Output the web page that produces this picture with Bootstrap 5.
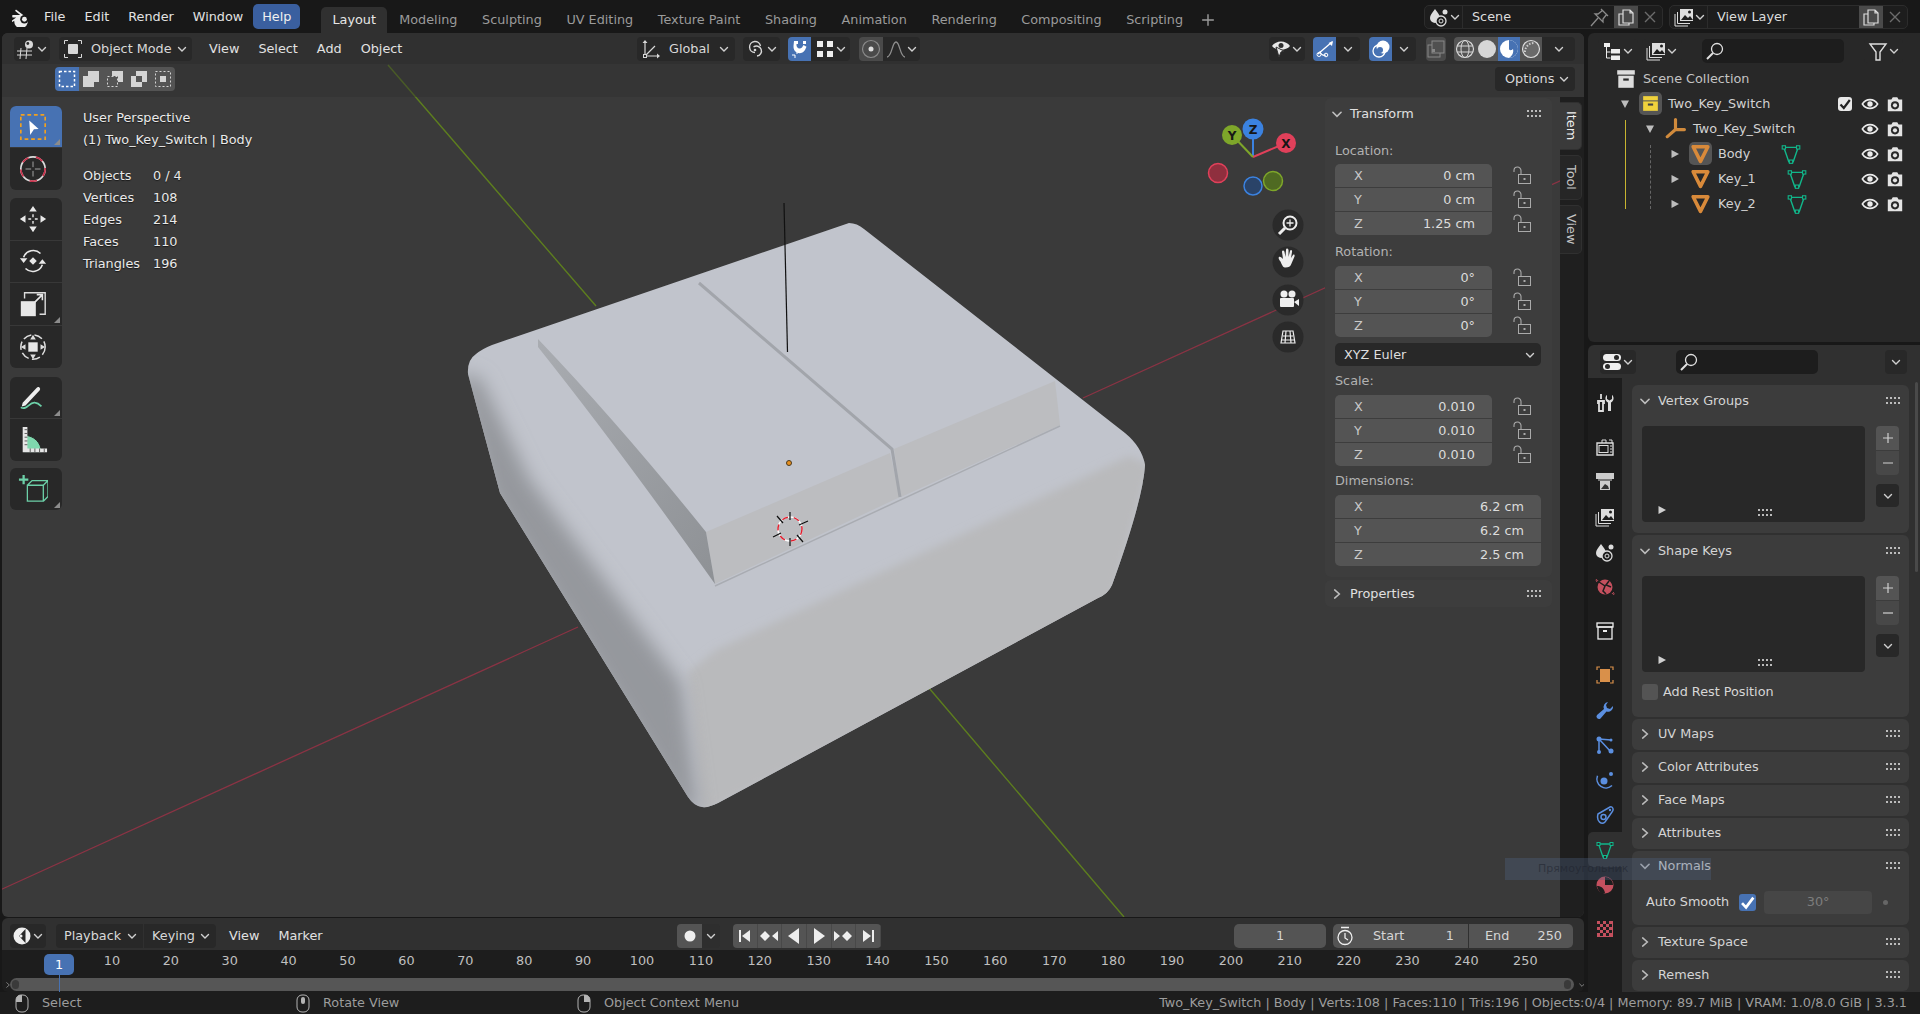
<!DOCTYPE html>
<html lang="en">
<head>
<meta charset="UTF-8">
<title>Blender 3.3</title>
<link href="https://cdn.jsdelivr.net/npm/bootstrap@5.3.3/dist/css/bootstrap.min.css" rel="stylesheet">
<script src="https://cdn.jsdelivr.net/npm/bootstrap@5.3.3/dist/js/bootstrap.bundle.min.js"></script>
<style>
html, body { width: 1920px; height: 1014px; overflow: hidden; }
body { background: #181818; color: #d6d6d6; font: 12.8px/1.2 "DejaVu Sans", sans-serif; white-space: nowrap; }
.ico { width: 20px; height: 20px; flex-shrink: 0; fill: currentColor; }
.ico-s { width: 12px; height: 12px; flex-shrink: 0; color: #d0d0d0; }
.app-shell { display: grid; grid-template-rows: 33px 959px 22px; height: 1014px; position: relative; }
.main-split { display: grid; grid-template-columns: 1588px 332px; }

/* top bar */
.top-bar { background: #181818; padding-left: 12px; }
.logo-ico { width: 21px; height: 21px; margin-right: 1.5px; color: #eee; }
.menu-item { padding: 0 9.5px; color: #e2e2e2; white-space: nowrap; }
.menu-help { background: #3a5f9f; border-radius: 5px; height: 25px; padding: 0 9px; margin-left: .5px; display: flex; align-items: center; color: #f0f0f0; }
.ws-tabs { margin-left: 21px; align-self: flex-end; height: 26px; }
.ws-tab { padding: 0 12.3px; color: #9b9b9b; white-space: nowrap; border-radius: 5px 5px 0 0; }
.ws-tab-on { background: #303030; color: #e6e6e6; padding: 0 11px; }
.ws-add { width: 14px; height: 14px; margin-left: 6px; color: #9b9b9b; }
.scene-box { height: 24px; background: #1d1d1d; border: 1px solid #2c2c2c; border-radius: 5px; margin-right: 6px; }
.scene-w { width: 239px; }
.layer-w { width: 239px; margin-right: 12px; }
.scene-pick { width: 38px; padding-left: 4px; border-right: 1px solid #2c2c2c; height: 100%; gap: 0; }
.scene-name { padding-left: 9px; color: #dcdcdc; }
.copy-btn { width: 24px; height: 22px; background: #4a4a4a; color: #ddd; }
.x-btn { width: 24px; height: 22px; color: #6c6c6c; font-size: 15px; }
.ico-c { width: 20px; height: 20px; }

/* viewport */
.left-col { display: flex; flex-direction: column; padding: 0 4px 0 2px; gap: 1px; }
.view-area { height: 884px; position: relative; border-radius: 6px; overflow: hidden; background: #3a3a3a; display: flex; flex-direction: column; }
.scene-svg { position: absolute; left: 0; top: 0; width: 1582px; height: 884px; }
.hdr-row { height: 31px; background: #303030; position: relative; flex-shrink: 0; padding-right: 9px; }
.tool-row { height: 33px; background: rgba(48,48,48,.45); position: relative; flex-shrink: 0; padding: 0 9px 3px 53px; }
.view-left { width: 635px; flex-shrink: 0; padding-left: 12px; }
.bl-btn { height: 24px; background: #282828; border-radius: 4px; color: #d8d8d8; flex-shrink: 0; }
.bl-on { background: #4772b3 !important; color: #fff; }
.bl-gray { background: #545454 !important; color: #e8e8e8; }
.bl-dim { background: #4a4a4a !important; color: #bbb; }
.join-l { border-radius: 4px 0 0 4px; }
.join-r { border-radius: 0 4px 4px 0; }
.w-edit { width: 36px; }
.w-mode { width: 133px; margin-left: 9px; margin-right: 7.5px; padding: 0 6px 0 4px; }
.w-global { width: 98px; padding: 0 5px 0 4px; }
.w-pivot { width: 37px; margin-left: 8px; }
.w-23 { width: 23px; }
.w-24 { width: 24px; }
.w-39 { width: 39px; }
.w-37 { width: 37px; }
.ms-8 { margin-left: 8px; }
.ms-9 { margin-left: 9px; }
.ms-10 { margin-left: 10px; }
.view-right { margin-left: auto; }
.w-36 { width: 36px; }
.w-22 { width: 22px; }
.w-33 { width: 33px; }
.w-20 { width: 20px; }
.sel-modes { height: 24px; border-radius: 4px; overflow: hidden; }
.sel-mode { width: 24px; height: 24px; background: #545454; color: #d4d4d4; }
.opt-btn { width: 80px; padding: 0 5px 0 10px; }
.view-body { flex-grow: 1; position: relative; min-height: 0; }
.tool-col { width: 52px; margin: 9px 0 0 8px; flex-shrink: 0; }
.tool-group { background: #282828; border-radius: 6px; margin-bottom: 8px; overflow: hidden; }
.tool-group-b { margin-bottom: 9px; }
.tool-group-b .tool-item { height: 42.5px; }
.tool-group-c { margin-bottom: 7px; }
.tool-item { height: 42px; display: flex; align-items: center; justify-content: center; border-bottom: 1px solid #383838; position: relative; padding-right: 6px; }
.tool-item:last-child { border-bottom: 0; }
.tool-item .ico { width: 30px; height: 30px; }
.tool-on { background: #4772b3; }
.corner-mark { position: absolute; right: 2px; bottom: 2px; width: 0; height: 0; border-left: 6px solid transparent; border-bottom: 6px solid #8c8c8c; }
.stats-col { margin: 10px 0 0 21px; line-height: 22px; color: #eaeaea; text-shadow: 0 1px 1px #1a1a1a; white-space: nowrap; }
.stats-gap { height: 14px; }
.stats-key { display: inline-block; width: 70px; }
.gizmo-svg { width: 110px; height: 270px; margin-left: auto; flex-shrink: 0; }
.n-panels { width: 227px; margin: 1px 8px 0 10px; flex-shrink: 0; }
.n-panel { background: #3d3d3d; border-radius: 6px; }
.n-head { height: 32px; padding: 0 10px 0 5px; color: #e0e0e0; }
.n-body { padding: 0 11px 11px 10px; }
.n-label { height: 24px; color: #b2b2b2; margin-top: 7px; padding-bottom: 4px; display: flex; align-items: center; }
.n-label-first { margin-top: 11px; padding-bottom: 4px; height: 23px; }
.n-label-mid { margin-top: 5px; }
.n-label-dim { margin-top: 5px; }
.vec-fields { width: 157px; border-radius: 5px; overflow: hidden; display: flex; flex-direction: column; gap: 1px; }
.vec-wide { width: 206px; }
.num-field { height: 23px; background: #545454; padding: 0 17px 0 19px; color: #dcdcdc; }
.num-field span:first-child { color: #c8c8c8; }
.vec-locks { width: 49px; display: flex; flex-direction: column; gap: 1px; }
.lock-cell { height: 23px; padding-left: 20px; display: flex; align-items: center; color: #aaa; }
.euler-pick { height: 23px; background: #282828; border-radius: 5px; margin-top: 6px; padding: 0 5px 0 9px; color: #dedede; }
.n-props { margin-top: 3px; height: 27px; }
.side-tabs { width: 24px; background: #1f1f1f; flex-shrink: 0; }
.side-tab { width: 22px; background: #262626; border-radius: 0 5px 5px 0; margin-bottom: 5px; color: #c4c4c4; writing-mode: vertical-rl; text-align: center; border: 1px solid #303030; border-left: 0; }
.side-tab-on { background: #3a3a3a; color: #f0f0f0; height: 48px; line-height: 20px; margin-top: 5px; }
.side-tab-a { height: 45px; line-height: 20px; }
.side-tab-b { height: 49px; line-height: 20px; }
.chev-head { width: 14px; height: 14px; margin-right: 6px; color: #bdbdbd; }

/* timeline */
.time-area { height: 74px; background: #1d1d1d; border-radius: 6px; overflow: hidden; position: relative; }
.time-head { height: 32px; background: #303030; padding: 3px 11px 0 8px; }
.time-left { width: 667px; flex-shrink: 0; }
.w-playback { width: 87px; margin-left: 10px; padding: 0 5px 0 8px; }
.w-keying { width: 73px; padding: 0 5px 0 8px; border-left: 1px solid #303030; margin-right: 3.5px; }
.w-record { width: 25px; }
.w-recarrow { width: 18px; background: #2e2e2e; color: #555; }
.transport { margin-left: 13px; border-radius: 4px; overflow: hidden; }
.trans-btn { width: 24.66px; height: 24px; background: #545454; color: #e8e8e8; border-right: 1px solid #484848; }
.frame-now { width: 92px; height: 24px; background: #545454; border-radius: 5px; margin-right: 7px; }
.timer-btn { width: 24px; height: 24px; background: #545454; border-radius: 5px 0 0 5px; color: #e4e4e4; }
.range-field { height: 24px; background: #545454; padding: 0 14px 0 16px; }
.w-start { width: 111px; margin-right: 1px; }
.w-end { width: 104px; border-radius: 0 5px 5px 0; padding-right: 11px; }
.ruler-row { height: 27px; color: #c0c0c0; }
.frame-box { width: 30px; height: 21px; margin: 4px 8.5px 0 42px; background: #4772b3; border-radius: 5px; color: #fff; }
.frame-cell { width: 58.9px; flex-shrink: 0; text-align: center; padding-top: 3px; }
.scroll-row { height: 15px; padding-left: 2px; color: #8a8a8a; }
.scroll-bar { width: 1564px; height: 13px; margin-left: -2px; margin-right: 4px; background: #565656; border-radius: 7px; position: relative; flex-shrink: 0; }
.scroll-knob { position: absolute; width: 7px; height: 9px; top: 2px; left: 2px; border-radius: 4px; background: #3a3a3a; }
.scroll-knob-r { left: auto; right: 3px; }
.play-line { position: absolute; left: 57px; top: 56px; width: 1px; height: 18px; background: #4772b3; }
.chev-tiny { width: 8px; height: 12px; flex-shrink: 0; }

/* right column */
.right-col { display: flex; flex-direction: column; gap: 3px; padding-right: 0; }
.outliner { height: 309px; background: #282828; border-radius: 6px 0 0 6px; overflow: hidden; }
.out-head { height: 33px; padding: 3px 0 0 10px; }
.w-40 { width: 40px; }
.out-search { width: 142px; height: 24px; background: #1d1d1d; border-radius: 5px; margin-left: 20px; padding-left: 3px; }
.w-filter { width: 39px; margin-left: 20px; }
.tree-row { height: 25px; color: #d2d2d2; white-space: nowrap; padding-right: 16px; }
.tree-root { padding-left: 27px; color: #c4c4c4; }
.tree-l1 { padding-left: 31px; }
.tree-l2 { padding-left: 56px; }
.tree-l3 { padding-left: 81px; }
.tree-arrow { width: 12px; height: 12px; color: #bdbdbd; flex-shrink: 0; }
.tree-ico { width: 23px; height: 23px; margin-left: 8px; margin-right: 6px; flex-shrink: 0; border-radius: 5px; padding: 1px; }
.tree-ico-on { background: #555; }
.root-ico { width: 22px; height: 22px; margin-right: 6px; }
.tree-data { width: 22px; height: 22px; margin-left: 30px; }
.tree-tools { margin-left: auto; gap: 7px; }
.tree-tools .ico { width: 18px; height: 18px; }
.tree-check { width: 14px; height: 14px; margin-right: 2px; background: #e8e8e8; border-radius: 3px; color: #222; }
.guide-l1 { position: absolute; left: 37px; top: 87px; width: 1px; height: 89px; background: #c8b430; }
.guide-l2 { position: absolute; left: 62px; top: 112px; height: 64px; border-left: 1px dashed #666; }
.outliner-wrap { position: relative; }
.props-area { height: 647px; background: #303030; border-radius: 6px 0 0 0; overflow: hidden; position: relative; }
.props-head { height: 33px; padding: 0 13px 0 12px; }
.props-search { width: 142px; height: 24px; background: #1d1d1d; border-radius: 5px; margin-left: 40px; padding-left: 3px; }
.props-body { height: 614px; }
.tab-col { width: 34px; background: #1d1d1d; padding-top: 7px; flex-shrink: 0; }
.tab-cell { height: 35px; display: flex; align-items: center; justify-content: center; }
.tab-cell .ico { width: 20px; height: 20px; }
.tab-gap { margin-top: 9px; }
.tab-on { background: #303030; border-radius: 5px 0 0 5px; }
.panel-col { flex-grow: 1; padding: 7px 11px 0 10px; overflow: hidden; }
.pr-panel { background: #3c3c3c; border-radius: 6px; margin-bottom: 2px; }
.pr-head { height: 31px; padding: 0 8px 0 6px; color: #d4d4d4; }
.grip-ico { width: 16px; height: 10px; margin-left: auto; color: #bcbcbc; }
.list-wrap { padding: 10px 10px 11px 10px; }
.list-box { width: 223px; height: 96px; background: #282828; border-radius: 4px; padding: 0 0 6px 14px; position: relative; }
.list-grip { position: absolute; left: 115px; bottom: 4px; width: 16px; height: 10px; color: #bbb; }
.list-btns { width: 23px; margin-left: 11px; }
.sq-plus { height: 24px; background: #545454; border-radius: 4px 4px 0 0; color: #eee; }
.sq-minus { height: 24px; background: #484848; border-radius: 0 0 4px 4px; color: #7e7e7e; margin-top: 1px; }
.sq-more { height: 23px; background: #282828; border-radius: 4px; margin-top: 9px; color: #ddd; }
.rest-row { height: 32px; padding: 0 10px 0 10px; margin: -7px 0 0; }
.rest-wrap { padding-bottom: 8.5px; }
.fake-check { width: 16px; height: 16px; background: #545454; border-radius: 3px; margin-right: 5px; }
.smooth-row { height: 43px; padding: 5px 10px 7px 14px; }
.on-check { width: 17px; height: 17px; background: #4772b3; border-radius: 3px; color: #fff; margin-left: 10px; }
.angle-field { width: 108px; height: 23px; background: #464646; border-radius: 4px; margin-left: 8px; color: #7d7d7d; }
.anim-dot { width: 5px; height: 5px; border-radius: 50%; background: #666; margin-left: 11px; }
.prop-scroll { position: absolute; right: 2px; top: 37px; width: 3px; height: 190px; background: #4a4a4a; border-radius: 2px; }

/* status */
.status-bar { background: #1d1d1d; color: #9c9c9c; white-space: nowrap; padding-left: 15px; }
.hint-item { width: 281px; flex-shrink: 0; gap: 13px; }
.status-info { margin-left: auto; padding-right: 13px; }
.mouse-ico { width: 14px; height: 19px; flex-shrink: 0; color: #b4b4b4; }
.ghost-tip { position: absolute; left: 1505px; top: 858px; width: 206px; height: 22px; background: rgba(80,104,138,.32); font-size: 11px; color: rgba(30,34,44,.55); padding-left: 33px; line-height: 22px; }
</style>
</head>
<body>
<svg class="d-none" xmlns="http://www.w3.org/2000/svg">
  <symbol id="i-logo" viewBox="0 0 20 20"><path d="M.8 8.6h7L3.4 5.1c-.8-.7.2-1.9 1-1.3l6.6 5A6.4 6.4 0 1 1 2.2 14L.6 15.1c-.9.4-1.4-.6-.7-1.2L4 11H1c-1 0-1-2.4-.2-2.4z" fill="#eee"/><circle cx="11.8" cy="12.6" r="4" fill="#181818"/><circle cx="11.8" cy="12.6" r="2.3" fill="#eee"/></symbol>
  <symbol id="i-chev" viewBox="0 0 12 12"><path d="M2.5 4.5 6 8l3.5-3.5" fill="none" stroke="currentColor" stroke-width="1.4" stroke-linecap="round"/></symbol>
  <symbol id="i-chevr" viewBox="0 0 12 12"><path d="M4 2.5 8 6l-4 3.5" fill="none" stroke="currentColor" stroke-width="1.3" stroke-linecap="round"/></symbol>
  <symbol id="i-view3d" viewBox="0 0 20 20"><path d="M1 12h15M1 16h15M5 9l-1 11M11 9l-1 11" stroke="currentColor" fill="none"/><circle cx="13" cy="5.5" r="4" fill="currentColor"/><circle cx="11.8" cy="4.5" r="1.4" fill="#282828"/></symbol>
  <symbol id="i-objmode" viewBox="0 0 20 20"><rect x="5" y="5" width="10" height="10" rx="1" fill="currentColor"/><path d="M1.5 5V1.5H5M15 1.5h3.5V5M18.500 15v3.500H15M5 18.500H1.500V15" fill="none" stroke="currentColor"/></symbol>
  <symbol id="i-global" viewBox="0 0 20 20"><path d="M4 2v15h14M4 17 14 7" fill="none" stroke="currentColor" stroke-width="1.2"/><path d="M4 1l2.500 3h-5zM19 17l-3 2.500v-5z" fill="currentColor"/><rect x="2.500" y="15.500" width="3" height="3" fill="#282828" stroke="currentColor"/></symbol>
  <symbol id="i-pivot" viewBox="0 0 20 20"><path d="M9 13.500A5.500 5.500 0 1 1 14.500 7" fill="none" stroke="currentColor" stroke-width="1.4"/><path d="M7.500 8a5 5 0 1 1 3.500 9" fill="none" stroke="currentColor" stroke-width="1.4" transform="rotate(0)"/><circle cx="9" cy="11" r="1.300"/></symbol>
  <symbol id="i-snap" viewBox="0 0 20 20"><path d="M4 2h4v3H6.500c-.5 4 3 6 5.500 3.500l1.500-2.500 3 1.800L15 11c-4 6-12 3-11.500-4z" fill="#fff"/><rect x="13" y="2" width="3" height="3" fill="#fff"/><path d="M2 16h3v3M7 13v2" stroke="#fff" fill="none"/></symbol>
  <symbol id="i-grid4" viewBox="0 0 20 20"><rect x="2" y="2" width="6" height="6" fill="#eee"/><rect x="12" y="2" width="6" height="6" fill="#eee"/><rect x="2" y="12" width="6" height="6" fill="#eee"/><rect x="12" y="12" width="6" height="6" fill="#eee"/></symbol>
  <symbol id="i-prop" viewBox="0 0 20 20"><circle cx="10" cy="10" r="8.500" fill="none" stroke="#8a8a8a" stroke-width="1.200"/><circle cx="10" cy="10" r="2.500" fill="#ddd"/></symbol>
  <symbol id="i-fall" viewBox="0 0 20 20"><path d="M1 18c5 0 5-15 9-15s4 15 9 15" fill="none" stroke="#8f8f8f" stroke-width="1.300"/></symbol>
  <symbol id="i-visible" viewBox="0 0 20 20"><path d="M1 7c4-6 14-6 18 0-4 5-14 5-18 0z" fill="#e8e8e8"/><circle cx="10" cy="6.500" r="2.500" fill="#303030"/><path d="M5 8l8 4-3 1-2 5z" fill="#e8e8e8" stroke="#303030"/></symbol>
  <symbol id="i-gizmo" viewBox="0 0 20 20"><path d="M3 15 17 3M5 12c0 3 3 5 6 4" fill="none" stroke="#fff" stroke-width="1.300"/><path d="M18 2l-1 5-3.500-3z" fill="#fff"/><circle cx="4" cy="15.500" r="2" fill="none" stroke="#fff"/><circle cx="11" cy="16" r="1.800" fill="none" stroke="#fff"/></symbol>
  <symbol id="i-overlay" viewBox="0 0 20 20"><circle cx="8" cy="12" r="6" fill="none" stroke="#fff" stroke-width="1.300"/><circle cx="12" cy="8" r="6.500" fill="#fff"/><circle cx="9" cy="11" r="3" fill="#4772b3"/></symbol>
  <symbol id="i-xray" viewBox="0 0 20 20"><rect x="2" y="6" width="12" height="12" fill="none" stroke="#888"/><rect x="6" y="2" width="12" height="12" fill="#505050" stroke="#888"/><rect x="6" y="10" width="3" height="3" fill="#888"/></symbol>
  <symbol id="i-wire" viewBox="0 0 20 20"><circle cx="10" cy="10" r="8.500" fill="none" stroke="#d8d8d8" stroke-width="1.200"/><ellipse cx="10" cy="10" rx="4" ry="8.500" fill="none" stroke="#d8d8d8"/><path d="M2 7h16M2 13h16" stroke="#d8d8d8"/></symbol>
  <symbol id="i-solid" viewBox="0 0 20 20"><circle cx="10" cy="10" r="9" fill="#d6d6d6"/></symbol>
  <symbol id="i-mat" viewBox="0 0 20 20"><circle cx="10" cy="10" r="9" fill="#fff"/><path d="M10 1a9 9 0 0 1 0 18c3-2 5-5 4-9-2 2-4 1-4 0z" fill="#4772b3"/></symbol>
  <symbol id="i-rend" viewBox="0 0 20 20"><circle cx="10" cy="10" r="8.500" fill="#6a6a6a" stroke="#ddd" stroke-width="1.200"/><path d="M4 13c0-5 4-9 9-9" fill="none" stroke="#ccc" stroke-dasharray="1.500 1.500" stroke-width="2"/></symbol>
  <symbol id="s-1" viewBox="0 0 20 20"><rect x="2.500" y="2.500" width="15" height="15" fill="none" stroke="#fff" stroke-width="1.500" stroke-dasharray="2.500 2"/></symbol>
  <symbol id="s-2" viewBox="0 0 20 20"><path d="M7 2h11v11h-5v5H2V7h5z" fill="currentColor"/></symbol>
  <symbol id="s-3" viewBox="0 0 20 20"><rect x="2.500" y="7.500" width="10" height="10" fill="none" stroke="currentColor" stroke-dasharray="2 2"/><path d="M7 2h11v11h-5V7H7z" fill="currentColor"/></symbol>
  <symbol id="s-4" viewBox="0 0 20 20"><path d="M7 2h11v11h-5V7H7zM2 7h5v6h6v5H2z" fill="currentColor"/></symbol>
  <symbol id="s-5" viewBox="0 0 20 20"><rect x="2.500" y="2.500" width="15" height="15" fill="none" stroke="currentColor" stroke-dasharray="2 2"/><rect x="7" y="7" width="6" height="6" fill="currentColor"/></symbol>
  <symbol id="t-select" viewBox="0 0 32 32"><rect x="3" y="3" width="26" height="26" fill="none" stroke="#f0a020" stroke-width="1.800" stroke-dasharray="4 3"/><path d="M12 9l10 9-5 .5-4 6z" fill="#fff"/></symbol>
  <symbol id="t-cursor" viewBox="0 0 32 32"><circle cx="16" cy="16" r="13" fill="none" stroke="#ddd" stroke-width="1.800"/><circle cx="16" cy="16" r="13" fill="none" stroke="#c8304a" stroke-width="1.800" stroke-dasharray="8 8"/><path d="M16 8v6M16 18v6M8 16h6M18 16h6" stroke="#aaa"/></symbol>
  <symbol id="t-move" viewBox="0 0 32 32"><path d="M16 2l4 6h-8zM16 30l-4-6h8zM2 16l6-4v8zM30 16l-6 4v-8z" fill="#e8e8e8"/><path d="M16 11v3M16 18v3M11 16h3M18 16h3" stroke="#e8e8e8" stroke-width="1.500"/></symbol>
  <symbol id="t-rotate" viewBox="0 0 32 32"><path d="M6 12a11 11 0 0 1 18-4M26 20A11 11 0 0 1 8 24" fill="none" stroke="#e8e8e8" stroke-width="1.700"/><path d="M16 12l4 4-4 4-4-4z" fill="#e8e8e8"/><path d="M2 13l4 5 4-5zM30 19l-4-5-4 5z" fill="#e8e8e8"/></symbol>
  <symbol id="t-scale" viewBox="0 0 32 32"><path d="M7 10V4h22v23h-6" fill="none" stroke="#ddd" stroke-width="1.500"/><rect x="3" y="13" width="16" height="16" fill="#e8e8e8"/><path d="M18 14l7-7M20 6h6v6" fill="none" stroke="#e8e8e8" stroke-width="1.700"/></symbol>
  <symbol id="t-trans" viewBox="0 0 32 32"><circle cx="16" cy="16" r="13" fill="none" stroke="#ddd" stroke-width="1.600" stroke-dasharray="9 3.500"/><rect x="11" y="11" width="10" height="10" fill="#e8e8e8"/><path d="M16 3l3 5h-6zM16 29l-3-5h6zM3 16l5-3v6zM29 16l-5 3v-6z" fill="#ddd"/></symbol>
  <symbol id="t-note" viewBox="0 0 32 32"><path d="M5 21 20 5c2-2 5 1 3 3L8 24l-4 1z" fill="#eee"/><path d="M3 26c6 4 9-6 15-5 4 .5 5 2 7 4" fill="none" stroke="#6cd0a8" stroke-width="1.800"/></symbol>
  <symbol id="t-meas" viewBox="0 0 32 32"><path d="M7 11a18 18 0 0 1 18 18H7z" fill="#7fd8ae" stroke="#222"/><path d="M5 2h5v23h21v4H5z" fill="#e6e6e6"/><path d="M7 5h3M7 9h3M7 13h3M7 17h3M7 21h3M13 25v4M18 25v4M23 25v4M28 25v4" stroke="#555"/></symbol>
  <symbol id="t-add" viewBox="0 0 32 32"><path d="M10 12h17v17H10zM10 12l5-5h17v0l-5 5M27 12l5-5v17l-5 5" fill="none" stroke="#6cd0a8" stroke-width="1.400"/><path d="M6 1v10M1 6h10" stroke="#6cd0a8" stroke-width="2.400"/></symbol>
  <symbol id="i-scene" viewBox="0 0 20 20"><path d="M6 2c3 4 5 6 5 9a5 5 0 1 1-10 0c0-3 2-5 5-9z" fill="#ddd"/><circle cx="16" cy="5" r="2.500" fill="#ddd"/><circle cx="12" cy="14" r="5" fill="#1d1d1d" stroke="#ddd" stroke-width="1.300"/><circle cx="12" cy="14" r="2" fill="none" stroke="#ddd"/></symbol>
  <symbol id="i-layer" viewBox="0 0 20 20"><path d="M1 7v12h13M3.500 5v11.500H16" fill="none" stroke="#ddd"/><rect x="6" y="2" width="13" height="12" fill="#ddd"/><path d="M7 13l4-5 3 3 2-2 3 4z" fill="#1d1d1d"/><circle cx="15.500" cy="5" r="1.500" fill="#1d1d1d"/></symbol>
  <symbol id="i-pin" viewBox="0 0 20 20"><path d="M1 19 8 11M11 2l7 7M12.500 3.500 8 7 5 7l8 8 0-3 3.500-4.500" fill="none" stroke="#8a8a8a" stroke-width="1.300"/></symbol>
  <symbol id="i-copy" viewBox="0 0 20 20"><path d="M7 3h7l3 3v10H7zM14 3v3h3M7 7H3v11h10v-2" fill="none" stroke="currentColor" stroke-width="1.200"/></symbol>
  <symbol id="i-x" viewBox="0 0 20 20"><path d="M5 5l10 10M15 5 5 15" stroke="currentColor" stroke-width="1.400"/></symbol>
  <symbol id="i-search" viewBox="0 0 20 20"><circle cx="12" cy="8" r="5.500" fill="none" stroke="#e0e0e0" stroke-width="1.300"/><path d="M8 12l-6 6" stroke="#e0e0e0" stroke-width="2"/></symbol>
  <symbol id="i-filter" viewBox="0 0 20 20"><path d="M2 3h16l-6 8v8h-4v-8z" fill="none" stroke="#ddd" stroke-width="1.400"/></symbol>
  <symbol id="i-tree" viewBox="0 0 20 20"><rect x="2" y="2" width="6" height="4" fill="#eee"/><path d="M4.500 6v11h4M4.500 11h4" stroke="#eee" fill="none"/><rect x="9" y="8" width="9" height="4.500" fill="#eee"/><rect x="9" y="14.500" width="9" height="4.500" fill="#eee"/></symbol>
  <symbol id="i-box" viewBox="0 0 20 20"><rect x="2" y="2" width="16" height="4" fill="#ddd"/><rect x="3" y="7" width="14" height="11" fill="#ddd"/><rect x="7.500" y="9.500" width="5" height="2" fill="#282828"/></symbol>
  <symbol id="i-coll" viewBox="0 0 20 20"><rect x="3" y="3" width="14" height="4" fill="#f0d23c"/><rect x="3" y="8" width="14" height="9" fill="#f0d23c"/><rect x="7.500" y="10" width="5" height="2" fill="#444"/></symbol>
  <symbol id="i-empty" viewBox="0 0 20 20"><path d="M10 1.500v9.500M10 11 2 18M10 11h8.500" stroke="#d08a3c" stroke-width="3" fill="none" stroke-linecap="round"/></symbol>
  <symbol id="i-mesh" viewBox="0 0 20 20"><path d="M3 3.500h14L10 17.500z" fill="none" stroke="#d98a3a" stroke-width="3.400" stroke-linejoin="round"/></symbol>
  <symbol id="i-data" viewBox="0 0 20 20"><path d="M3.500 4h13l-4.500 13H8z" fill="none" stroke="#11b68a" stroke-width="1.300"/><rect x="2" y="2.500" width="3" height="3" fill="#282828" stroke="#11b68a"/><rect x="15" y="2.500" width="3" height="3" fill="#282828" stroke="#11b68a"/><rect x="8.500" y="15.500" width="3" height="3" fill="#282828" stroke="#11b68a"/></symbol>
  <symbol id="i-eye" viewBox="0 0 20 20"><path d="M1.500 10c4-6.500 13-6.500 17 0-4 6.500-13 6.500-17 0z" fill="none" stroke="#ececec" stroke-width="1.700"/><circle cx="10" cy="10" r="3" fill="#ececec"/></symbol>
  <symbol id="i-cam" viewBox="0 0 20 20"><path d="M2 5h4l1.500-2.500h5L14 5h4v13H2z" fill="#e4e4e4"/><circle cx="10" cy="11.500" r="4.500" fill="#282828"/><circle cx="10" cy="11.500" r="2.300" fill="#e4e4e4"/></symbol>
  <symbol id="i-check" viewBox="0 0 14 14"><path d="M2.500 7.500 5.800 11l6-8" fill="none" stroke="currentColor" stroke-width="2.200"/></symbol>
  <symbol id="i-lock" viewBox="0 0 20 20"><path d="M2 6V4.500a3.500 3.500 0 0 1 7 0V8" fill="none" stroke="currentColor" stroke-width="1.100"/><rect x="6.500" y="8.500" width="12" height="9" fill="none" stroke="currentColor"/><rect x="11.500" y="12" width="2" height="2" fill="currentColor"/></symbol>
  <symbol id="i-tri" viewBox="0 0 12 12"><path d="M2.500 2 10 6l-7.500 4z" fill="currentColor"/></symbol>
  <symbol id="i-trid" viewBox="0 0 12 12"><path d="M2 2.500 10 2.500 6 10z" fill="currentColor"/></symbol>
  <symbol id="i-grip" viewBox="0 0 16 10"><g fill="currentColor"><rect x="1" y="1" width="2" height="2"/><rect x="5" y="1" width="2" height="2"/><rect x="9" y="1" width="2" height="2"/><rect x="13" y="1" width="2" height="2"/><rect x="1" y="6" width="2" height="2"/><rect x="5" y="6" width="2" height="2"/><rect x="9" y="6" width="2" height="2"/><rect x="13" y="6" width="2" height="2"/></g></symbol>
  <symbol id="i-plus" viewBox="0 0 12 12"><path d="M6 1v10M1 6h10" stroke="currentColor" stroke-width="1.200"/></symbol>
  <symbol id="i-minus" viewBox="0 0 12 12"><path d="M1 6h10" stroke="currentColor" stroke-width="1.200"/></symbol>
  <symbol id="i-toggle" viewBox="0 0 20 20"><rect x="1" y="2" width="18" height="7" rx="3.500" fill="#eee"/><circle cx="14.500" cy="5.500" r="2.500" fill="#282828"/><rect x="1" y="11" width="18" height="7" rx="3.500" fill="#eee"/><circle cx="5.500" cy="14.500" r="2.500" fill="#282828"/></symbol>
  <symbol id="p-tool" viewBox="0 0 20 20"><path d="M6 1v5M3 8h6v2H8v8H4v-8H3z" fill="none" stroke="#ddd" stroke-width="1.800"/><path d="M12 2v4l2.500 1.500L17 6V2c2 1 2.500 6-1 7.500V18h-3V9.500C9.500 8 10 3 12 2z" fill="#ddd"/></symbol>
  <symbol id="p-render" viewBox="0 0 20 20"><path d="M2 6h16v12H2z" fill="none" stroke="#ddd" stroke-width="1.400"/><path d="M7 6V3h4v3M14 3h3v3" fill="none" stroke="#ddd"/><rect x="4" y="8.500" width="9" height="7" fill="none" stroke="#ddd"/><path d="M15 9h2M15 12h2M15 15h2" stroke="#ddd"/></symbol>
  <symbol id="p-output" viewBox="0 0 20 20"><rect x="1" y="1" width="18" height="6" fill="#ccc"/><rect x="3" y="7" width="14" height="2" fill="#777"/><path d="M5 9h10v9H5z" fill="#ccc"/><path d="M6 17l4-5 3 2 1 3z" fill="#333"/></symbol>
  <symbol id="p-world" viewBox="0 0 20 20"><circle cx="10" cy="10" r="7.500" fill="#c4505e"/><path d="M4 5 10 9l-2 5 3 3M14 4l-3 4 5 2" stroke="#1d1d1d" fill="none" stroke-width="1.500"/><path d="M3 4C1 1 .5 3 2 5M17 16c2 3 3 1 1-1" stroke="#c4505e" fill="none"/></symbol>
  <symbol id="p-coll" viewBox="0 0 20 20"><rect x="2" y="2" width="16" height="4" fill="none" stroke="#eee" stroke-width="1.300"/><rect x="3" y="6" width="14" height="12" fill="none" stroke="#eee" stroke-width="1.300"/><rect x="8" y="9" width="4" height="2" fill="#eee"/></symbol>
  <symbol id="p-obj" viewBox="0 0 20 20"><rect x="5" y="4" width="10" height="13" fill="#d9904a"/><path d="M2 5V2h3M15 2h3v3M18 15v3h-3M5 18H2v-3" fill="none" stroke="#d9904a" stroke-width="1.200"/></symbol>
  <symbol id="p-mod" viewBox="0 0 20 20"><path d="M13 2a5 5 0 0 0-4 7l-7 6a2.500 2.500 0 0 0 3.500 3.500l6-7a5 5 0 0 0 6.500-5.500l-3 3-3-1-1-3z" fill="#5b8fe0"/></symbol>
  <symbol id="p-part" viewBox="0 0 20 20"><path d="M4 4l12 1M4 4l12 13M4 4v13" stroke="#5b8fe0" stroke-width="1.500"/><circle cx="4" cy="4" r="2.500" fill="#5b8fe0"/><circle cx="16" cy="5" r="1.500" fill="#5b8fe0"/><circle cx="16" cy="16" r="2.500" fill="#5b8fe0"/><circle cx="4" cy="17" r="2" fill="#5b8fe0"/></symbol>
  <symbol id="p-phys" viewBox="0 0 20 20"><circle cx="9" cy="11" r="3.500" fill="#5b8fe0"/><path d="M5 3a9 9 0 0 0 9 15" fill="none" stroke="#5b8fe0" stroke-width="1.500" transform="rotate(-25 10 10)"/><circle cx="16" cy="4" r="2" fill="#5b8fe0"/></symbol>
  <symbol id="p-con" viewBox="0 0 20 20"><path d="M3 9 15 2c3-1 4 3 2 5l-7 10c-3 3-9 0-7-8z" fill="none" stroke="#5b8fe0" stroke-width="1.500"/><circle cx="8.500" cy="12" r="2.500" fill="none" stroke="#5b8fe0" stroke-width="1.500"/><circle cx="15" cy="5" r="1.200" fill="#5b8fe0"/></symbol>
  <symbol id="p-mat" viewBox="0 0 20 20"><circle cx="10" cy="10" r="8.500" fill="#c4505e"/><path d="M10 2a8 8 0 0 1 8 8l-8 0zM2 11c3 0 7 1 8 7l-3 .5C4 17 2.500 14 2 11z" fill="#1d1d1d"/></symbol>
  <symbol id="p-tex" viewBox="0 0 20 20"><rect x="2" y="2" width="16" height="16" fill="#c4505e"/><g fill="#1d1d1d"><rect x="5" y="2" width="3" height="3"/><rect x="11" y="2" width="3" height="3"/><rect x="2" y="5" width="3" height="3"/><rect x="8" y="5" width="3" height="3"/><rect x="14" y="5" width="3" height="3"/><rect x="5" y="8" width="3" height="3"/><rect x="11" y="8" width="3" height="3"/><rect x="2" y="11" width="3" height="3"/><rect x="8" y="11" width="3" height="3"/><rect x="14" y="11" width="3" height="3"/><rect x="5" y="14" width="3" height="3"/><rect x="11" y="14" width="3" height="3"/></g></symbol>
  <symbol id="i-clock" viewBox="0 0 20 20"><circle cx="10" cy="10" r="8.500" fill="#eee"/><path d="M13.500 3 7 10l6.500 7z" fill="#282828"/><circle cx="9" cy="10" r="1.500" fill="#eee"/></symbol>
  <symbol id="i-rec" viewBox="0 0 20 20"><circle cx="10" cy="10" r="5.500" fill="#eee"/></symbol>
  <symbol id="i-first" viewBox="0 0 20 20"><path d="M5 4v12" stroke="#eee" stroke-width="2"/><path d="M15 4v12L7 10z" fill="#eee"/></symbol>
  <symbol id="i-pkey" viewBox="0 0 20 20"><path d="M6 5l5 5-5 5-5-5zM19 5v10l-6-5z" fill="#eee"/></symbol>
  <symbol id="i-rev" viewBox="0 0 20 20"><path d="M15 2v16L4 10z" fill="#eee"/></symbol>
  <symbol id="i-play" viewBox="0 0 20 20"><path d="M5 2v16l11-8z" fill="#eee"/></symbol>
  <symbol id="i-nkey" viewBox="0 0 20 20"><path d="M14 5l5 5-5 5-5-5zM1 5v10l6-5z" fill="#eee"/></symbol>
  <symbol id="i-last" viewBox="0 0 20 20"><path d="M15 4v12" stroke="#eee" stroke-width="2"/><path d="M5 4v12l8-6z" fill="#eee"/></symbol>
  <symbol id="i-timer" viewBox="0 0 20 20"><circle cx="10" cy="11.500" r="7" fill="none" stroke="#eee" stroke-width="1.300"/><path d="M6 1.500h8M10 7v5l3 2" stroke="#eee" stroke-width="1.300" fill="none"/></symbol>
  <symbol id="m-left" viewBox="0 0 14 19"><rect x="1" y="1" width="12" height="17" rx="5" fill="none" stroke="currentColor"/><path d="M7 1H6C3 1 1 3 1 6v2h6z" fill="currentColor"/></symbol>
  <symbol id="m-mid" viewBox="0 0 14 19"><rect x="1" y="1" width="12" height="17" rx="5" fill="none" stroke="currentColor"/><rect x="5" y="3" width="4" height="7" rx="2" fill="currentColor"/></symbol>
  <symbol id="m-right" viewBox="0 0 14 19"><rect x="1" y="1" width="12" height="17" rx="5" fill="none" stroke="currentColor"/><path d="M7 1h1c3 0 5 2 5 5v2H7z" fill="currentColor"/></symbol>
</svg>

<div class="app-shell">
  <div class="top-bar d-flex align-items-center">
    <svg class="logo-ico"><use href="#i-logo"/></svg>
    <span class="menu-item">File</span><span class="menu-item">Edit</span><span class="menu-item">Render</span><span class="menu-item">Window</span>
    <span class="menu-help">Help</span>
    <div class="ws-tabs d-flex align-items-center">
      <span class="ws-tab ws-tab-on d-flex align-items-center h-100">Layout</span>
      <span class="ws-tab">Modeling</span><span class="ws-tab">Sculpting</span><span class="ws-tab">UV Editing</span><span class="ws-tab">Texture Paint</span><span class="ws-tab">Shading</span><span class="ws-tab">Animation</span><span class="ws-tab">Rendering</span><span class="ws-tab">Compositing</span><span class="ws-tab">Scripting</span>
      <svg class="ws-add"><use href="#i-plus"/></svg>
    </div>
    <div class="scene-box scene-w d-flex align-items-center ms-auto">
      <div class="scene-pick d-flex align-items-center"><svg class="ico"><use href="#i-scene"/></svg><svg class="ico-s"><use href="#i-chev"/></svg></div>
      <span class="scene-name">Scene</span>
      <svg class="ico-c ms-auto"><use href="#i-pin"/></svg>
      <div class="copy-btn d-flex align-items-center justify-content-center ms-1"><svg class="ico-c"><use href="#i-copy"/></svg></div>
      <div class="x-btn d-flex align-items-center justify-content-center"><svg class="ico-c"><use href="#i-x"/></svg></div>
    </div>
    <div class="scene-box layer-w d-flex align-items-center">
      <div class="scene-pick d-flex align-items-center"><svg class="ico"><use href="#i-layer"/></svg><svg class="ico-s"><use href="#i-chev"/></svg></div>
      <span class="scene-name">View Layer</span>
      <div class="copy-btn d-flex align-items-center justify-content-center ms-auto"><svg class="ico-c"><use href="#i-copy"/></svg></div>
      <div class="x-btn d-flex align-items-center justify-content-center"><svg class="ico-c"><use href="#i-x"/></svg></div>
    </div>
  </div>

  <div class="main-split">
    <div class="left-col">
      <div class="view-area">
        <svg class="scene-svg" viewBox="2 33 1582 884" xmlns="http://www.w3.org/2000/svg">
          <defs>
            <clipPath id="body-clip"><path d="M849 223Q857 223 864 229L1125 433Q1142 447 1145 465Q1143 500 1112 585Q1108 594 1098 598L718 803Q708 808 702 807Q694 806 688 797L500 493L468 374Q467 360 476 354Q482 349 492 345Z"/></clipPath>
            <filter id="blur-s" x="-20%" y="-20%" width="140%" height="140%"><feGaussianBlur stdDeviation="4"/></filter>
            <filter id="blur-m" x="-30%" y="-30%" width="160%" height="160%"><feGaussianBlur stdDeviation="9"/></filter>
            <linearGradient id="side-grad" x1="0" y1="0" x2="1" y2="1"><stop offset="0" stop-color="#a9acb1"/><stop offset="1" stop-color="#8e9195"/></linearGradient>
          </defs>
          <path d="M388 65 596 306M929 688 1124 917" stroke="#5d7e1e" stroke-width="1.400" fill="none"/>
          <path d="M0 890 578 627M1083 398 1584 170" stroke="#8a3344" stroke-width="1.300" fill="none"/>
          <g clip-path="url(#body-clip)">
            <rect x="440" y="200" width="720" height="620" fill="#c1c4cc"/>
            <path d="M688 672 716 650 1129 456 1150 465 1112 600 702 815Z" fill="#b9babc" filter="url(#blur-s)"/>
            <path d="M458 372 480 378 530 480 682 684 700 815 680 805 490 495Z" fill="#95989d" filter="url(#blur-m)"/>
          </g>
          <path d="M706 532 890 453 900 497 715 584Z" fill="#bcbdc0"/>
          <path d="M894 449 1055 381 1060 425 901 497Z" fill="#bcbdc0"/>
          <path d="M538 339Q620 425 706 532L715 584Q620 450 538 347Z" fill="url(#side-grad)"/>
          <path d="M715 586 1060 426" stroke="#a9acb2" stroke-width="1.500" fill="none"/>
          <path d="M699 283 892 449 900 497" stroke="#a2a5ab" stroke-width="3" fill="none"/>
          <path d="M784 203 787.500 352" stroke="#111" stroke-width="1.200"/>
          <circle cx="789" cy="463" r="2.500" fill="#e8901e" stroke="#4a3a20"/>
          <g fill="none">
            <circle cx="790" cy="529" r="12" stroke="#fff" stroke-width="1.500"/>
            <circle cx="790" cy="529" r="12" stroke="#e02030" stroke-width="1.500" stroke-dasharray="6 6"/>
            <path d="M790 512v8M790 538v8M773 537l8-4M799 525l9-4M777 516l6 7M797 535l6 7" stroke="#111" stroke-width="1.200"/>
          </g>
        </svg>

        <div class="hdr-row d-flex align-items-center">
          <div class="view-left d-flex align-items-center">
            <div class="bl-btn w-edit d-flex align-items-center justify-content-center"><svg class="ico"><use href="#i-view3d"/></svg><svg class="ico-s"><use href="#i-chev"/></svg></div>
            <div class="bl-btn w-mode d-flex align-items-center gap-1"><svg class="ico"><use href="#i-objmode"/></svg><span class="ms-1">Object Mode</span><svg class="ico-s ms-auto"><use href="#i-chev"/></svg></div>
            <span class="menu-item">View</span><span class="menu-item">Select</span><span class="menu-item">Add</span><span class="menu-item">Object</span>
          </div>
          <div class="bl-btn w-global d-flex align-items-center"><svg class="ico"><use href="#i-global"/></svg><span class="ms-2">Global</span><svg class="ico-s ms-auto"><use href="#i-chev"/></svg></div>
          <div class="bl-btn w-pivot d-flex align-items-center justify-content-center"><svg class="ico"><use href="#i-pivot"/></svg><svg class="ico-s"><use href="#i-chev"/></svg></div>
          <div class="bl-btn bl-on join-l w-23 ms-8 d-flex align-items-center justify-content-center"><svg class="ico"><use href="#i-snap"/></svg></div>
          <div class="bl-btn join-r w-39 d-flex align-items-center justify-content-center"><svg class="ico"><use href="#i-grid4"/></svg><svg class="ico-s"><use href="#i-chev"/></svg></div>
          <div class="bl-btn bl-dim join-l w-24 ms-9 d-flex align-items-center justify-content-center"><svg class="ico"><use href="#i-prop"/></svg></div>
          <div class="bl-btn join-r w-37 d-flex align-items-center justify-content-center"><svg class="ico"><use href="#i-fall"/></svg><svg class="ico-s"><use href="#i-chev"/></svg></div>
          <div class="view-right d-flex align-items-center">
            <div class="bl-btn w-36 d-flex align-items-center justify-content-center"><svg class="ico"><use href="#i-visible"/></svg><svg class="ico-s"><use href="#i-chev"/></svg></div>
            <div class="bl-btn bl-on join-l w-23 ms-8 d-flex align-items-center justify-content-center"><svg class="ico"><use href="#i-gizmo"/></svg></div>
            <div class="bl-btn join-r w-24 d-flex align-items-center justify-content-center"><svg class="ico-s"><use href="#i-chev"/></svg></div>
            <div class="bl-btn bl-on join-l w-23 ms-9 d-flex align-items-center justify-content-center"><svg class="ico"><use href="#i-overlay"/></svg></div>
            <div class="bl-btn join-r w-24 d-flex align-items-center justify-content-center"><svg class="ico-s"><use href="#i-chev"/></svg></div>
            <div class="bl-btn bl-dim w-20 ms-10 d-flex align-items-center justify-content-center"><svg class="ico"><use href="#i-xray"/></svg></div>
            <div class="bl-btn bl-gray join-l w-22 ms-8 d-flex align-items-center justify-content-center"><svg class="ico"><use href="#i-wire"/></svg></div>
            <div class="bl-btn bl-gray w-22 rounded-0 d-flex align-items-center justify-content-center"><svg class="ico"><use href="#i-solid"/></svg></div>
            <div class="bl-btn bl-on w-22 rounded-0 d-flex align-items-center justify-content-center"><svg class="ico"><use href="#i-mat"/></svg></div>
            <div class="bl-btn bl-gray w-22 rounded-0 d-flex align-items-center justify-content-center"><svg class="ico"><use href="#i-rend"/></svg></div>
            <div class="bl-btn join-r w-33 d-flex align-items-center justify-content-center"><svg class="ico-s"><use href="#i-chev"/></svg></div>
          </div>
        </div>

        <div class="tool-row d-flex align-items-center">
          <div class="sel-modes d-flex">
            <div class="sel-mode bl-on d-flex align-items-center justify-content-center"><svg class="ico"><use href="#s-1"/></svg></div>
            <div class="sel-mode d-flex align-items-center justify-content-center"><svg class="ico"><use href="#s-2"/></svg></div>
            <div class="sel-mode d-flex align-items-center justify-content-center"><svg class="ico"><use href="#s-3"/></svg></div>
            <div class="sel-mode d-flex align-items-center justify-content-center"><svg class="ico"><use href="#s-4"/></svg></div>
            <div class="sel-mode d-flex align-items-center justify-content-center"><svg class="ico"><use href="#s-5"/></svg></div>
          </div>
          <div class="bl-btn opt-btn d-flex align-items-center ms-auto"><span>Options</span><svg class="ico-s ms-auto"><use href="#i-chev"/></svg></div>
        </div>

        <div class="view-body d-flex">
          <div class="tool-col">
            <div class="tool-group">
              <div class="tool-item tool-on"><svg class="ico"><use href="#t-select"/></svg><i class="corner-mark"></i></div>
              <div class="tool-item"><svg class="ico"><use href="#t-cursor"/></svg></div>
            </div>
            <div class="tool-group tool-group-b">
              <div class="tool-item"><svg class="ico"><use href="#t-move"/></svg></div>
              <div class="tool-item"><svg class="ico"><use href="#t-rotate"/></svg></div>
              <div class="tool-item"><svg class="ico"><use href="#t-scale"/></svg><i class="corner-mark"></i></div>
              <div class="tool-item"><svg class="ico"><use href="#t-trans"/></svg></div>
            </div>
            <div class="tool-group tool-group-c">
              <div class="tool-item"><svg class="ico"><use href="#t-note"/></svg><i class="corner-mark"></i></div>
              <div class="tool-item"><svg class="ico"><use href="#t-meas"/></svg></div>
            </div>
            <div class="tool-group">
              <div class="tool-item"><svg class="ico"><use href="#t-add"/></svg><i class="corner-mark"></i></div>
            </div>
          </div>

          <div class="stats-col">
            <div>User Perspective</div>
            <div>(1) Two_Key_Switch | Body</div>
            <div class="stats-gap"></div>
            <div><span class="stats-key">Objects</span>0 / 4</div>
            <div><span class="stats-key">Vertices</span>108</div>
            <div><span class="stats-key">Edges</span>214</div>
            <div><span class="stats-key">Faces</span>110</div>
            <div><span class="stats-key">Triangles</span>196</div>
          </div>

          <svg class="gizmo-svg" viewBox="1205 97 110 270" xmlns="http://www.w3.org/2000/svg">
            <path d="M1253 157V129" stroke="#3b82e0" stroke-width="2"/><path d="M1253 157 1286 143" stroke="#e0405a" stroke-width="2"/><path d="M1253 157 1232 135" stroke="#7ea62a" stroke-width="2"/>
            <circle cx="1218" cy="173" r="9.500" fill="#8f2f3e" stroke="#e0405a" stroke-width="1.500"/>
            <circle cx="1273" cy="181" r="9.500" fill="#4f6a22" stroke="#7ea62a" stroke-width="1.500"/>
            <circle cx="1253" cy="186" r="9" fill="#2a4368" stroke="#3b82e0" stroke-width="1.500"/>
            <circle cx="1232" cy="135" r="10" fill="#7ea62a"/>
            <circle cx="1286" cy="143" r="10" fill="#e0405a"/>
            <circle cx="1253" cy="129" r="10.500" fill="#3b82e0"/>
            <g font-family="DejaVu Sans, sans-serif" font-size="12" font-weight="700" text-anchor="middle" fill="#161616"><text x="1232" y="139.500">Y</text><text x="1286" y="147.500">X</text><text x="1253" y="133.500">Z</text></g>
            <g fill="#2a2a2a"><circle cx="1288" cy="225" r="15.500"/><circle cx="1288" cy="262" r="15.500"/><circle cx="1288" cy="300" r="15.500"/><circle cx="1288" cy="337" r="15.500"/></g>
            <g fill="#eee">
              <circle cx="1290" cy="223" r="6.500" fill="none" stroke="#eee" stroke-width="2"/><path d="M1290 219.500v7M1286.500 223h7" stroke="#eee" stroke-width="1.300"/><path d="M1285 228l-6 6" stroke="#eee" stroke-width="3"/>
              <path d="M1281 262c-2-2-3-4-2-5s3 1 4 2l-1-7c0-2 2-2 2.500 0l1 5 .5-7c0-2 2-2 2.500 0v7l1.500-6c.5-2 2.500-1 2 1l-1 6 2-3c1-1 2 0 1.500 1.500l-3 7c-1 3-3 4-6 4-2 0-3-1-5-6z"/>
              <circle cx="1284" cy="294" r="3.500"/><circle cx="1292" cy="294" r="3.500"/><rect x="1280" y="298" width="14" height="9" rx="1"/><path d="M1294 302l5-3v7z"/>
              <path d="M1281 343l2-12h10l2 12zM1283 336h10M1282 340h12M1286 331l-1 12M1290 331l1 12" fill="none" stroke="#eee" stroke-width="1.200"/>
            </g>
          </svg>

          <div class="n-panels">
            <div class="n-panel">
              <div class="n-head d-flex align-items-center"><svg class="chev-head"><use href="#i-chev"/></svg><span>Transform</span><svg class="grip-ico"><use href="#i-grip"/></svg></div>
              <div class="n-body">
                <div class="n-label n-label-first">Location:</div>
                <div class="d-flex" data-vec="0 cm|0 cm|1.25 cm"></div>
                <div class="n-label">Rotation:</div>
                <div class="d-flex" data-vec="0°|0°|0°"></div>
                <div class="euler-pick d-flex align-items-center justify-content-between"><span>XYZ Euler</span><svg class="ico-s"><use href="#i-chev"/></svg></div>
                <div class="n-label n-label-mid">Scale:</div>
                <div class="d-flex" data-vec="0.010|0.010|0.010"></div>
                <div class="n-label n-label-dim">Dimensions:</div>
                <div class="d-flex" data-vec="6.2 cm|6.2 cm|2.5 cm" data-wide="1"></div>
              </div>
            </div>
            <div class="n-panel n-props">
              <div class="n-head n-props d-flex align-items-center"><svg class="chev-head"><use href="#i-chevr"/></svg><span>Properties</span><svg class="grip-ico"><use href="#i-grip"/></svg></div>
            </div>
          </div>
          <div class="side-tabs">
            <div class="side-tab side-tab-on">Item</div>
            <div class="side-tab side-tab-a">Tool</div>
            <div class="side-tab side-tab-b">View</div>
          </div>
        </div>
      </div>

      <div class="time-area">
        <div class="time-head d-flex align-items-center">
          <div class="time-left d-flex align-items-center">
            <div class="bl-btn w-edit d-flex align-items-center justify-content-center"><svg class="ico"><use href="#i-clock"/></svg><svg class="ico-s"><use href="#i-chev"/></svg></div>
            <div class="bl-btn join-l w-playback d-flex align-items-center justify-content-between"><span>Playback</span><svg class="ico-s"><use href="#i-chev"/></svg></div>
            <div class="bl-btn join-r w-keying d-flex align-items-center justify-content-between"><span>Keying</span><svg class="ico-s"><use href="#i-chev"/></svg></div>
            <span class="menu-item">View</span><span class="menu-item">Marker</span>
          </div>
          <div class="bl-btn bl-gray join-l w-record d-flex align-items-center justify-content-center"><svg class="ico"><use href="#i-rec"/></svg></div>
          <div class="bl-btn join-r w-recarrow d-flex align-items-center justify-content-center"><svg class="ico-s"><use href="#i-chev"/></svg></div>
          <div class="transport d-flex">
            <div class="trans-btn d-flex align-items-center justify-content-center"><svg class="ico"><use href="#i-first"/></svg></div>
            <div class="trans-btn d-flex align-items-center justify-content-center"><svg class="ico"><use href="#i-pkey"/></svg></div>
            <div class="trans-btn d-flex align-items-center justify-content-center"><svg class="ico"><use href="#i-rev"/></svg></div>
            <div class="trans-btn d-flex align-items-center justify-content-center"><svg class="ico"><use href="#i-play"/></svg></div>
            <div class="trans-btn d-flex align-items-center justify-content-center"><svg class="ico"><use href="#i-nkey"/></svg></div>
            <div class="trans-btn d-flex align-items-center justify-content-center"><svg class="ico"><use href="#i-last"/></svg></div>
          </div>
          <div class="d-flex align-items-center ms-auto">
            <div class="frame-now d-flex align-items-center justify-content-center">1</div>
            <div class="timer-btn d-flex align-items-center justify-content-center"><svg class="ico"><use href="#i-timer"/></svg></div>
            <div class="range-field w-start d-flex align-items-center justify-content-between"><span>Start</span><span>1</span></div>
            <div class="range-field w-end d-flex align-items-center justify-content-between"><span>End</span><span>250</span></div>
          </div>
        </div>
        <div class="ruler-row d-flex" id="frameRuler"><div class="frame-box d-flex align-items-center justify-content-center">1</div></div>
        <div class="scroll-row d-flex align-items-center">
          <svg class="chev-tiny"><use href="#i-chevr"/></svg>
          <div class="scroll-bar"><i class="scroll-knob"></i><i class="scroll-knob scroll-knob-r"></i></div>
          <svg class="chev-tiny"><use href="#i-chev"/></svg>
        </div>
        <i class="play-line"></i>
      </div>
    </div>

    <div class="right-col">
      <div class="outliner outliner-wrap">
        <div class="out-head d-flex align-items-center">
          <div class="bl-btn w-40 d-flex align-items-center justify-content-center"><svg class="ico"><use href="#i-tree"/></svg><svg class="ico-s"><use href="#i-chev"/></svg></div>
          <div class="bl-btn w-40 ms-1 d-flex align-items-center justify-content-center"><svg class="ico"><use href="#i-layer"/></svg><svg class="ico-s"><use href="#i-chev"/></svg></div>
          <div class="out-search d-flex align-items-center"><svg class="ico"><use href="#i-search"/></svg></div>
          <div class="bl-btn w-filter d-flex align-items-center justify-content-center"><svg class="ico"><use href="#i-filter"/></svg><svg class="ico-s"><use href="#i-chev"/></svg></div>
        </div>
        <div class="tree-row tree-root d-flex align-items-center"><svg class="root-ico"><use href="#i-box"/></svg><span>Scene Collection</span></div>
        <div class="tree-row tree-l1 d-flex align-items-center"><svg class="tree-arrow"><use href="#i-trid"/></svg><svg class="tree-ico tree-ico-on"><use href="#i-coll"/></svg><span>Two_Key_Switch</span>
          <div class="tree-tools d-flex align-items-center"><div class="tree-check d-flex"><svg viewBox="0 0 14 14"><use href="#i-check"/></svg></div><svg class="ico"><use href="#i-eye"/></svg><svg class="ico"><use href="#i-cam"/></svg></div></div>
        <div class="tree-row tree-l2 d-flex align-items-center"><svg class="tree-arrow"><use href="#i-trid"/></svg><svg class="tree-ico"><use href="#i-empty"/></svg><span>Two_Key_Switch</span>
          <div class="tree-tools d-flex align-items-center"><svg class="ico"><use href="#i-eye"/></svg><svg class="ico"><use href="#i-cam"/></svg></div></div>
        <div class="tree-row tree-l3 d-flex align-items-center"><svg class="tree-arrow"><use href="#i-tri"/></svg><svg class="tree-ico tree-ico-on"><use href="#i-mesh"/></svg><span>Body</span><svg class="tree-data"><use href="#i-data"/></svg>
          <div class="tree-tools d-flex align-items-center"><svg class="ico"><use href="#i-eye"/></svg><svg class="ico"><use href="#i-cam"/></svg></div></div>
        <div class="tree-row tree-l3 d-flex align-items-center"><svg class="tree-arrow"><use href="#i-tri"/></svg><svg class="tree-ico"><use href="#i-mesh"/></svg><span>Key_1</span><svg class="tree-data"><use href="#i-data"/></svg>
          <div class="tree-tools d-flex align-items-center"><svg class="ico"><use href="#i-eye"/></svg><svg class="ico"><use href="#i-cam"/></svg></div></div>
        <div class="tree-row tree-l3 d-flex align-items-center"><svg class="tree-arrow"><use href="#i-tri"/></svg><svg class="tree-ico"><use href="#i-mesh"/></svg><span>Key_2</span><svg class="tree-data"><use href="#i-data"/></svg>
          <div class="tree-tools d-flex align-items-center"><svg class="ico"><use href="#i-eye"/></svg><svg class="ico"><use href="#i-cam"/></svg></div></div>
        <i class="guide-l1"></i><i class="guide-l2"></i>
      </div>

      <div class="props-area">
        <div class="props-head d-flex align-items-center">
          <div class="bl-btn w-36 d-flex align-items-center justify-content-center"><svg class="ico"><use href="#i-toggle"/></svg><svg class="ico-s"><use href="#i-chev"/></svg></div>
          <div class="props-search d-flex align-items-center"><svg class="ico"><use href="#i-search"/></svg></div>
          <div class="bl-btn w-22 ms-auto d-flex align-items-center justify-content-center"><svg class="ico-s"><use href="#i-chev"/></svg></div>
        </div>
        <div class="props-body d-flex">
          <div class="tab-col">
            <div class="tab-cell"><svg class="ico"><use href="#p-tool"/></svg></div>
            <div class="tab-cell tab-gap"><svg class="ico"><use href="#p-render"/></svg></div>
            <div class="tab-cell"><svg class="ico"><use href="#p-output"/></svg></div>
            <div class="tab-cell"><svg class="ico"><use href="#i-layer"/></svg></div>
            <div class="tab-cell"><svg class="ico"><use href="#i-scene"/></svg></div>
            <div class="tab-cell"><svg class="ico"><use href="#p-world"/></svg></div>
            <div class="tab-cell tab-gap"><svg class="ico"><use href="#p-coll"/></svg></div>
            <div class="tab-cell tab-gap"><svg class="ico"><use href="#p-obj"/></svg></div>
            <div class="tab-cell"><svg class="ico"><use href="#p-mod"/></svg></div>
            <div class="tab-cell"><svg class="ico"><use href="#p-part"/></svg></div>
            <div class="tab-cell"><svg class="ico"><use href="#p-phys"/></svg></div>
            <div class="tab-cell"><svg class="ico"><use href="#p-con"/></svg></div>
            <div class="tab-cell tab-on"><svg class="ico"><use href="#i-data"/></svg></div>
            <div class="tab-cell"><svg class="ico"><use href="#p-mat"/></svg></div>
            <div class="tab-cell tab-gap"><svg class="ico"><use href="#p-tex"/></svg></div>
          </div>
          <div class="panel-col">
            <div class="pr-panel">
              <div class="pr-head d-flex align-items-center"><svg class="chev-head"><use href="#i-chev"/></svg><span>Vertex Groups</span><svg class="grip-ico"><use href="#i-grip"/></svg></div>
              <div class="list-wrap d-flex">
                <div class="list-box d-flex align-items-end"><svg class="ico-s"><use href="#i-tri"/></svg><svg class="list-grip"><use href="#i-grip"/></svg></div>
                <div class="list-btns">
                  <div class="sq-plus d-flex align-items-center justify-content-center"><svg class="ico-s"><use href="#i-plus"/></svg></div>
                  <div class="sq-minus d-flex align-items-center justify-content-center"><svg class="ico-s"><use href="#i-minus"/></svg></div>
                  <div class="sq-more d-flex align-items-center justify-content-center"><svg class="ico-s"><use href="#i-chev"/></svg></div>
                </div>
              </div>
            </div>
            <div class="pr-panel rest-wrap">
              <div class="pr-head d-flex align-items-center"><svg class="chev-head"><use href="#i-chev"/></svg><span>Shape Keys</span><svg class="grip-ico"><use href="#i-grip"/></svg></div>
              <div class="list-wrap d-flex">
                <div class="list-box d-flex align-items-end"><svg class="ico-s"><use href="#i-tri"/></svg><svg class="list-grip"><use href="#i-grip"/></svg></div>
                <div class="list-btns">
                  <div class="sq-plus d-flex align-items-center justify-content-center"><svg class="ico-s"><use href="#i-plus"/></svg></div>
                  <div class="sq-minus d-flex align-items-center justify-content-center"><svg class="ico-s"><use href="#i-minus"/></svg></div>
                  <div class="sq-more d-flex align-items-center justify-content-center"><svg class="ico-s"><use href="#i-chev"/></svg></div>
                </div>
              </div>
              <div class="rest-row d-flex align-items-center"><i class="fake-check"></i><span>Add Rest Position</span></div>
            </div>
            <div class="pr-panel"><div class="pr-head d-flex align-items-center"><svg class="chev-head"><use href="#i-chevr"/></svg><span>UV Maps</span><svg class="grip-ico"><use href="#i-grip"/></svg></div></div>
            <div class="pr-panel"><div class="pr-head d-flex align-items-center"><svg class="chev-head"><use href="#i-chevr"/></svg><span>Color Attributes</span><svg class="grip-ico"><use href="#i-grip"/></svg></div></div>
            <div class="pr-panel"><div class="pr-head d-flex align-items-center"><svg class="chev-head"><use href="#i-chevr"/></svg><span>Face Maps</span><svg class="grip-ico"><use href="#i-grip"/></svg></div></div>
            <div class="pr-panel"><div class="pr-head d-flex align-items-center"><svg class="chev-head"><use href="#i-chevr"/></svg><span>Attributes</span><svg class="grip-ico"><use href="#i-grip"/></svg></div></div>
            <div class="pr-panel">
              <div class="pr-head d-flex align-items-center"><svg class="chev-head"><use href="#i-chev"/></svg><span>Normals</span><svg class="grip-ico"><use href="#i-grip"/></svg></div>
              <div class="smooth-row d-flex align-items-center"><span>Auto Smooth</span><div class="on-check d-flex"><svg viewBox="0 0 14 14"><use href="#i-check"/></svg></div><div class="angle-field d-flex align-items-center justify-content-center">30°</div><i class="anim-dot"></i></div>
            </div>
            <div class="pr-panel"><div class="pr-head d-flex align-items-center"><svg class="chev-head"><use href="#i-chevr"/></svg><span>Texture Space</span><svg class="grip-ico"><use href="#i-grip"/></svg></div></div>
            <div class="pr-panel"><div class="pr-head d-flex align-items-center"><svg class="chev-head"><use href="#i-chevr"/></svg><span>Remesh</span><svg class="grip-ico"><use href="#i-grip"/></svg></div></div>
          </div>
        </div>
        <i class="prop-scroll"></i>
      </div>
    </div>
  </div>

  <div class="status-bar d-flex align-items-center">
    <div class="hint-item d-flex align-items-center"><svg class="mouse-ico"><use href="#m-left"/></svg><span>Select</span></div>
    <div class="hint-item d-flex align-items-center"><svg class="mouse-ico"><use href="#m-mid"/></svg><span>Rotate View</span></div>
    <div class="hint-item d-flex align-items-center"><svg class="mouse-ico"><use href="#m-right"/></svg><span>Object Context Menu</span></div>
    <div class="status-info">Two_Key_Switch | Body | Verts:108 | Faces:110 | Tris:196 | Objects:0/4 | Memory: 89.7 MiB | VRAM: 1.0/8.0 GiB | 3.3.1</div>
  </div>
  <div class="ghost-tip">Прямоугольник</div>
</div>

<script>
  // xyz rows of the transform panel
  document.querySelectorAll("[data-vec]").forEach(function (el) {
    var vals = el.dataset.vec.split("|");
    var wide = el.dataset.wide;
    var axes = ["X", "Y", "Z"];
    var fields = axes.map(function (a, i) {
      return '<div class="num-field d-flex align-items-center justify-content-between"><span>' + a + '</span><span>' + vals[i] + '</span></div>';
    }).join("");
    var html = '<div class="vec-fields' + (wide ? ' vec-wide' : '') + '">' + fields + '</div>';
    if (!wide) {
      html += '<div class="vec-locks">' + axes.map(function () {
        return '<div class="lock-cell"><svg class="ico"><use href="#i-lock"/></svg></div>';
      }).join("") + '</div>';
    }
    el.innerHTML = html;
  });

  var ruler = document.getElementById("frameRuler");
  for (var f = 10; f <= 250; f += 10) {
    var cell = document.createElement("div");
    cell.className = "frame-cell";
    cell.textContent = f;
    ruler.appendChild(cell);
  }
</script>
</body>
</html>
